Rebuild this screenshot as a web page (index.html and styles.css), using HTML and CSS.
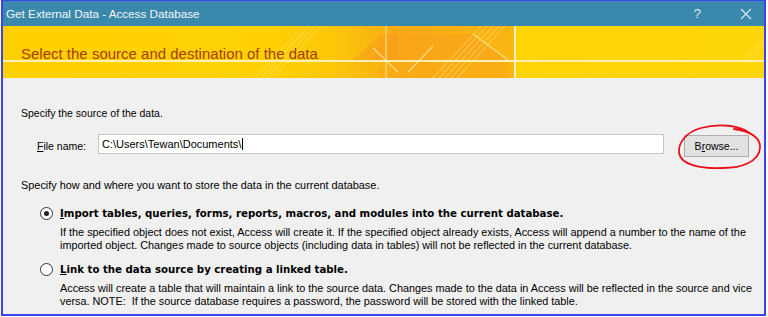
FILE: index.html
```html
<!DOCTYPE html>
<html>
<head>
<meta charset="utf-8">
<link rel="stylesheet" href="styles.css">
</head>
<body>
<div class="window">
  <div class="titlebar">
    <span class="title">Get External Data - Access Database</span>
    <span class="tb-btns">
      <span class="help">?</span>
      <svg class="close" width="12" height="12" viewBox="0 0 12 12"><path d="M1 1 L11 11 M11 1 L1 11" stroke="#dfe8ee" stroke-width="1.2" fill="none"/></svg>
    </span>
  </div>
  <div class="banner">
    <svg class="banner-art" width="761" height="52" viewBox="0 0 761 52">
      <defs>
        <linearGradient id="og" x1="0" y1="0" x2="1" y2="0">
          <stop offset="0" stop-color="#ffd000" stop-opacity="0"/>
          <stop offset="0.35" stop-color="#fcc40a" stop-opacity="0.85"/>
          <stop offset="0.6" stop-color="#f9ab16"/>
          <stop offset="1" stop-color="#fbb612"/>
        </linearGradient>
        <linearGradient id="yg" x1="0" y1="0" x2="1" y2="0">
          <stop offset="0" stop-color="#ffd000"/>
          <stop offset="1" stop-color="#ffd60a"/>
        </linearGradient>
      </defs>
      <rect x="0" y="0" width="761" height="52" fill="url(#yg)"/>
      <rect x="230" y="0" width="281" height="52" fill="url(#og)"/>
      <polygon points="378,8 470,8 505,34 350,34" fill="#f7a21a" opacity="0.6"/>
      <polygon points="382,10 395,2 395,34 370,34" fill="#f69c1c" opacity="0.5"/>
      <polygon points="376,40 400,36 505,36 505,52 376,52" fill="#f8a818" opacity="0.45"/>
      <g stroke="#ffe27a" stroke-width="1" opacity="0.7">
        <line x1="252" y1="52" x2="300" y2="0"/>
        <line x1="258" y1="52" x2="306" y2="0"/>
        <line x1="264" y1="52" x2="312" y2="0"/>
        <line x1="270" y1="52" x2="318" y2="0"/>
        <line x1="430" y1="52" x2="478" y2="0"/>
        <line x1="436" y1="52" x2="484" y2="0"/>
        <line x1="442" y1="52" x2="490" y2="0"/>
        <line x1="448" y1="52" x2="496" y2="0"/>
        <line x1="454" y1="52" x2="502" y2="0"/>
        <line x1="740" y1="34" x2="761" y2="14"/>
        <line x1="746" y1="34" x2="761" y2="20"/>
      </g>
      <g stroke="#ffeaa0" stroke-width="1.2" opacity="0.8">
        <line x1="383" y1="0" x2="383" y2="52"/>
        <line x1="370" y1="22" x2="395" y2="46"/>
        <line x1="405" y1="46" x2="430" y2="20"/>
        <line x1="470" y1="8" x2="505" y2="34"/>
      </g>
      <rect x="0" y="34" width="761" height="2" fill="#fff4c8" opacity="0.9"/>
      <rect x="511" y="0" width="2" height="52" fill="#fff4c8" opacity="0.95"/>
    </svg>
    <h1 class="banner-title">Select the source and destination of the data</h1>
  </div>
  <div class="content">
    <p class="section first">Specify the source of the data.</p>
    <div class="file-row">
      <label class="file-label"><u>F</u>ile name:</label>
      <div class="file-input">C:\Users\Tewan\Documents\<span class="caret"></span></div>
      <div class="browse-wrap">
        <button class="browse">B<u>r</u>owse...</button>
        <svg class="circle" width="86" height="50" viewBox="0 0 86 50"><path d="M74 12 C63 3 42 1 24 6 C9 10 1 21 2 31 C4 43 24 47 46 46 C64 46 82 40 83 26 C84 15 72 9 57 7" stroke="#e8101a" stroke-width="1.8" fill="none" stroke-linecap="round"/></svg>
      </div>
    </div>
    <p class="section second">Specify how and where you want to store the data in the current database.</p>
    <div class="option">
      <div class="opt-head"><span class="radio checked"></span><span class="opt-label"><u>I</u>mport tables, queries, forms, reports, macros, and modules into the current database.</span></div>
      <p class="opt-desc">If the specified object does not exist, Access will create it. If the specified object already exists, Access will append a number to the name of the imported object. Changes made to source objects (including data in tables) will not be reflected in the current database.</p>
    </div>
    <div class="option">
      <div class="opt-head"><span class="radio"></span><span class="opt-label"><u>L</u>ink to the data source by creating a linked table.</span></div>
      <p class="opt-desc">Access will create a table that will maintain a link to the source data. Changes made to the data in Access will be reflected in the source and vice versa. NOTE:&nbsp; If the source database requires a password, the password will be stored with the linked table.</p>
    </div>
  </div>
</div>
</body>
</html>
```

FILE: styles.css
```css
html, body {
  margin: 0;
  padding: 0;
  background: #ffffff;
}
body {
  font-family: "Liberation Sans", Arial, sans-serif;
  color: #000;
}
.window {
  margin-left: 1px;
  width: 761px;
  height: 313px;
  border-top: 1px solid #3c44f2;
  border-left: 2px solid #3c44f2;
  border-right: 2px solid #3c44f2;
  border-bottom: 2px solid #3c44f2;
  background: #f0f0f0;
  overflow: hidden;
  display: flex;
  flex-direction: column;
}
.titlebar {
  height: 25px;
  background: #3a88ac;
  display: flex;
  align-items: center;
  justify-content: space-between;
  padding-left: 3px;
  flex-shrink: 0;
}
.title {
  color: #f4f7f9;
  font-size: 11.7px;
}
.tb-btns {
  display: flex;
  align-items: center;
  gap: 39px;
  padding-right: 12px;
}
.help {
  color: #dfe8ee;
  font-size: 13px;
}
.banner {
  position: relative;
  height: 52px;
  flex-shrink: 0;
  display: flex;
  align-items: center;
}
.banner-art {
  position: absolute;
  left: 0;
  top: 0;
}
.banner-title {
  position: relative;
  margin: 0 0 0 18px;
  font-size: 15px;
  font-weight: normal;
  color: #a63c08;
  padding-top: 3px;
}
.content {
  padding-left: 18px;
  display: flex;
  flex-direction: column;
}
.section {
  margin: 0;
  font-size: 10.5px;
  line-height: 14px;
}
.section.first {
  margin-top: 28px;
}
.section.second {
  margin-top: 21px;
  font-size: 10.9px;
}
.file-row {
  display: flex;
  align-items: center;
  margin-top: 14px;
  padding-left: 16px;
  height: 23px;
}
.file-label {
  width: 61px;
  font-size: 10.5px;
}
.file-input {
  width: 561px;
  height: 18px;
  border: 1px solid #c4c4c4;
  background: #fff;
  font-size: 11px;
  line-height: 18px;
  padding-left: 3px;
  box-sizing: content-box;
  display: flex;
  align-items: center;
  align-self: flex-start;
}
.caret {
  display: inline-block;
  width: 1px;
  height: 12px;
  background: #000;
  margin-left: 1px;
}
.browse-wrap {
  position: relative;
  margin-left: 20px;
  align-self: flex-end;
}
.browse {
  width: 65px;
  height: 22px;
  background: #e1e1e1;
  border: 1px solid #adadad;
  font-family: "Liberation Sans", Arial, sans-serif;
  font-size: 10.5px;
  color: #000;
  padding: 0;
  display: block;
}
.circle {
  position: absolute;
  left: -7px;
  top: -13px;
}
.option {
  padding-left: 19px;
  margin-top: 14px;
}
.option + .option {
  margin-top: 10px;
}
.opt-head {
  display: flex;
  align-items: center;
  height: 14px;
}
.radio {
  width: 11px;
  height: 11px;
  border: 1px solid #333;
  border-radius: 50%;
  background: #fff;
  display: flex;
  align-items: center;
  justify-content: center;
  margin-right: 7px;
}
.radio.checked::after {
  content: "";
  width: 5px;
  height: 5px;
  border-radius: 50%;
  background: #222;
}
.opt-label {
  font-family: "DejaVu Sans", Verdana, sans-serif;
  font-size: 10.2px;
  font-weight: bold;
}
.opt-desc {
  margin: 6px 0 0 20px;
  font-size: 10.85px;
  line-height: 13px;
  width: 712px;
}
```
